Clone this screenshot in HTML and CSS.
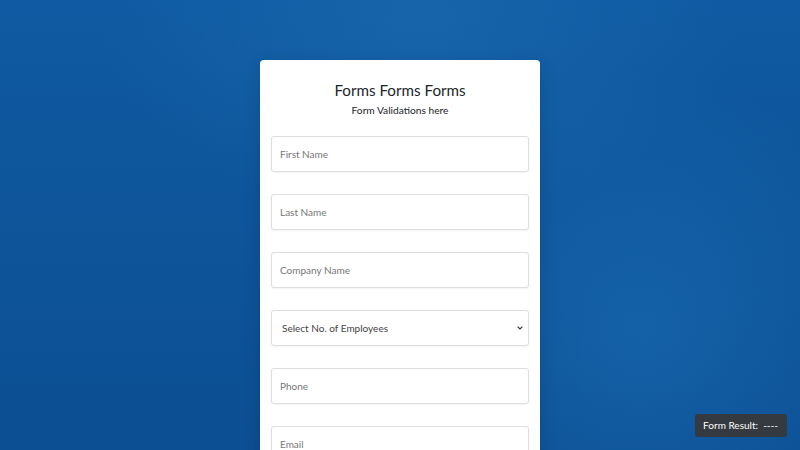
FILE: index.html
```html
<!DOCTYPE html>
<html lang="en">
<head>
  <meta charset="utf-8">
  <title>Forms Forms Forms</title>
  <link rel="stylesheet" href="styles.css">
</head>
<body>

  <div class="card">
    <div class="card-head">
      <h1>Forms Forms Forms</h1>
      <p>Form Validations here</p>
    </div>

    <form id="leadForm">
      <input type="text" id="firstName" placeholder="First Name" required />
      <input type="text" id="lastName" placeholder="Last Name" required />
      <input type="text" id="company" placeholder="Company Name" required />
      <select id="employees" required>
        <option value="">Select No. of Employees</option>
        <option value="1-10">1-10</option>
        <option value="11-50">11-50</option>
        <option value="51-200">51-200</option>
        <option value="200+">200+</option>
      </select>
      <input type="tel" id="phone" placeholder="Phone" required />
      <input type="email" id="email" placeholder="Email" required />
      <button type="submit">Submit</button>
    </form>
  </div>

  <div class="result">Form Result: &nbsp;<span id="result">----</span></div>

</body>
</html>
```

FILE: styles.css
```css
html, body {
  height: 100%;
}

body {
  margin: 0;
  font-family: Lato, "Open Sans", sans-serif;
  background-color: #0e56a0;
  background-image:
    radial-gradient(ellipse 320px 200px at 420px 20px, rgba(40, 120, 190, 0.35), transparent),
    radial-gradient(ellipse 260px 260px at 640px 330px, rgba(30, 115, 190, 0.45), transparent),
    linear-gradient(to bottom, #0f5aa2, #0c4f92);
  overflow: hidden;
  color: #212529;
}

.card {
  width: 280px;
  margin: 60px auto 0 auto;
  background: #fff;
  border-radius: 4px;
  box-shadow: 0 4px 16px rgba(0, 0, 0, 0.15);
  box-sizing: border-box;
  padding: 0 11px 20px 11px;
}

.card-head {
  text-align: center;
  padding-top: 19px;
  padding-bottom: 17px;
}

.card-head h1 {
  margin: 0;
  font-size: 15.2px;
  font-weight: 400;
  line-height: 22px;
}

.card-head p {
  margin: 0;
  font-size: 10.2px;
  line-height: 18px;
}

form {
  display: flex;
  flex-direction: column;
  gap: 22px;
}

input, select, button {
  box-sizing: border-box;
  width: 100%;
  height: 36px;
  padding: 0 8px;
  border: 1px solid #dedede;
  border-radius: 3px;
  font-family: inherit;
  font-size: 10px;
  color: #495057;
  background: #fff;
  box-shadow: 0 1px 2px rgba(0, 0, 0, 0.05);
}

input::placeholder {
  color: #777;
}

/* small chevron instead of the native arrow */
select {
  appearance: none;
  padding: 0 10px;
  color: #444;
  background: #fff url("data:image/svg+xml,%3Csvg xmlns='http://www.w3.org/2000/svg' width='6' height='4' viewBox='0 0 6 4'%3E%3Cpath d='M0.6 0.6 L3 3 L5.4 0.6' fill='none' stroke='%23333' stroke-width='1.1'/%3E%3C/svg%3E") no-repeat right 5px center;
}

button {
  background: #0d6efd;
  color: #fff;
  border: none;
}

.result {
  position: fixed;
  right: 13px;
  bottom: 13px;
  background: #343a40;
  color: #fff;
  font-size: 10px;
  padding: 4px 9px 4px 8px;
  line-height: 15px;
  border-radius: 3px;
}
```
